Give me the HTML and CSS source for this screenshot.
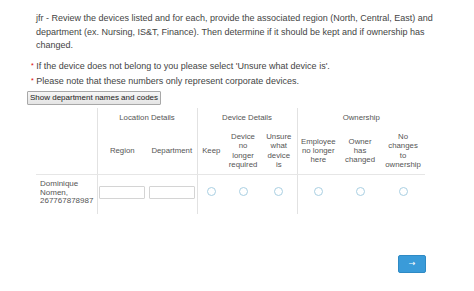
FILE: index.html
```html
<!DOCTYPE html>
<html lang="en">
<head>
  <meta charset="UTF-8" />
  <title>Device Review</title>
  <link rel="stylesheet" href="styles.css">
</head>
<body>

  <div class="question">
    <div class="question-text">
      jfr - Review the devices listed and for each, provide the associated region (North, Central, East) and department (ex. Nursing, IS&amp;T, Finance). Then determine if it should be kept and if ownership has changed.
    </div>

    <ul class="notes">
      <li><span class="req">*</span> If the device does not belong to you please select 'Unsure what device is'.</li>
      <li><span class="req">*</span> Please note that these numbers only represent corporate devices.</li>
    </ul>

    <button class="toggle" type="button">Show department names and codes</button>

    <table class="matrix">
      <colgroup>
        <col class="c-label">
        <col class="c-text"><col class="c-text">
        <col class="c-keep"><col class="c-mid"><col class="c-mid">
        <col class="c-own"><col class="c-own"><col class="c-last">
      </colgroup>
      <thead>
        <tr class="groups">
          <th></th>
          <th colspan="2" class="sep">Location Details</th>
          <th colspan="3" class="sep">Device Details</th>
          <th colspan="3" class="sep">Ownership</th>
        </tr>
        <tr class="choices">
          <th></th>
          <th class="sep">Region</th>
          <th>Department</th>
          <th class="sep">Keep</th>
          <th>Device<br>no<br>longer<br>required</th>
          <th>Unsure<br>what<br>device<br>is</th>
          <th class="sep">Employee<br>no longer<br>here</th>
          <th>Owner<br>has<br>changed</th>
          <th>No<br>changes<br>to<br>ownership</th>
        </tr>
      </thead>
      <tbody>
        <tr>
          <td class="label">Dominique<br>Nomen,<br>267767878987</td>
          <td class="sep"><input type="text" class="field"></td>
          <td><input type="text" class="field"></td>
          <td class="sep"><span class="radio"></span></td>
          <td><span class="radio"></span></td>
          <td><span class="radio"></span></td>
          <td class="sep"><span class="radio"></span></td>
          <td><span class="radio"></span></td>
          <td><span class="radio"></span></td>
        </tr>
      </tbody>
    </table>
  </div>

  <div class="nav">
    <button class="next" type="button">&rarr;</button>
  </div>

</body>
</html>
```

FILE: styles.css
```css
body {
  font-family: 'Liberation Sans', Arial, sans-serif;
  font-size: 9px;
  color: #444;
  margin: 0;
  background: #fff;
}

.question {
  padding: 12px 0 0 36px;
  width: 414px;
}

.question-text {
  line-height: 13.5px;
}

.notes {
  list-style: none;
  margin: 6px 0 0 -5px;
  padding: 0;
}

.notes li {
  line-height: 15.5px;
}

.req {
  color: #d00;
  font-size: 7px;
  position: relative;
  top: -1px;
}

.toggle {
  display: block;
  font-family: inherit;
  font-size: 8px;
  white-space: nowrap;
  color: #222;
  margin: 1px 0 0 -9px;
  padding: 0;
  height: 14px;
  width: 134px;
  border: 1px solid #a8a8a8;
  border-radius: 1px;
  background: linear-gradient(#f6f6f6, #e4e4e4);
}

.matrix {
  margin-top: 3px;
  border-collapse: collapse;
  table-layout: fixed;
  width: 389px;
  font-size: 7.8px;
  color: #555;
}

.c-label { width: 61px; }
.c-text { width: 50px; }
.c-keep { width: 28px; }
.c-mid { width: 36px; }
.c-own { width: 42px; }
.c-last { width: 44px; }

.matrix th {
  font-weight: normal;
  text-align: center;
  vertical-align: middle;
  line-height: 9.1px;
  padding: 0;
}

.groups th {
  height: 20px;
}

.choices th {
  height: 46px;
  border-bottom: 1px solid #e6e6e6;
}

.matrix td {
  height: 33px;
  padding: 0 0 6px;
  text-align: center;
  vertical-align: middle;
}

.matrix td.label {
  text-align: left;
  font-size: 8px;
  line-height: 8.8px;
  padding: 0 0 2px 4px;
}

.sep {
  border-left: 1px solid #e2e2e2;
}

.field {
  display: block;
  box-sizing: border-box;
  width: 46px;
  height: 13px;
  margin: 3px auto 0;
  border: 1px solid #d4d4d4;
  border-radius: 1px;
  padding: 0;
}

.radio {
  display: block;
  width: 9px;
  height: 9px;
  margin: 0 auto;
  box-sizing: border-box;
  border: 1px solid #a9cfe2;
  border-radius: 50%;
  background: #fff;
}

.nav {
  display: flex;
  justify-content: flex-end;
  width: 426px;
  margin-top: 41px;
}

.next {
  width: 28px;
  height: 18px;
  padding: 0;
  background: #3a9bd9;
  border: 1px solid #2f8ac4;
  border-radius: 2px;
  color: #fff;
  font-family: 'DejaVu Sans', sans-serif;
  font-size: 8px;
  line-height: 16px;
}
```
